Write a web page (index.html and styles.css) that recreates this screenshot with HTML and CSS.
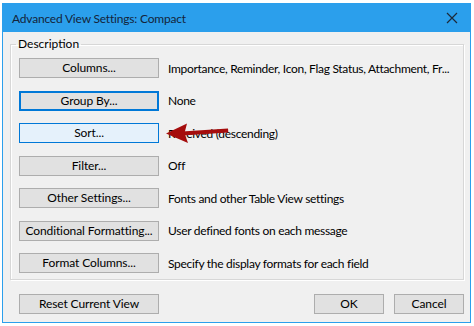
FILE: index.html
```html
<!DOCTYPE html>
<html lang="en">
<head>
    <meta charset="UTF-8">
    <title>Advanced View Settings: Compact</title>
    <link rel="stylesheet" href="styles.css">
</head>
<body>
    <div class="window">
        <div class="titlebar">
            <span class="title">Advanced View Settings: Compact</span>
            <svg class="close" width="12" height="12" viewBox="0 0 12 12">
                <path d="M1 1 L11 11 M11 1 L1 11" stroke="#1c2a3a" stroke-width="1.2" fill="none"/>
            </svg>
        </div>
        <div class="content">
            <fieldset class="group">
                <legend>Description</legend>
                <div class="rows">
                    <button class="btn">Columns...</button>
                    <span class="desc">Importance, Reminder, Icon, Flag Status, Attachment, Fr...</span>

                    <button class="btn btn-default">Group By...</button>
                    <span class="desc">None</span>

                    <button class="btn btn-hover">Sort...</button>
                    <span class="desc desc-arrow">Received (descending)
                        <!-- red callout arrow -->
                        <svg class="arrow" width="70" height="24" viewBox="0 0 70 24">
                            <path d="M16 10.5 L62 7.5 L62.3 11.5 L16.3 14.5 Z" fill="#a50d0d"/>
                            <path d="M0 12.5 L21 2.5 L18.5 12 L22 22 Z" fill="#a50d0d"/>
                        </svg>
                    </span>

                    <button class="btn">Filter...</button>
                    <span class="desc">Off</span>

                    <button class="btn">Other Settings...</button>
                    <span class="desc">Fonts and other Table View settings</span>

                    <button class="btn">Conditional Formatting...</button>
                    <span class="desc">User defined fonts on each message</span>

                    <button class="btn">Format Columns...</button>
                    <span class="desc">Specify the display formats for each field</span>
                </div>
            </fieldset>
            <div class="footer">
                <button class="btn">Reset Current View</button>
                <div class="footer-right">
                    <button class="btn btn-small">OK</button>
                    <button class="btn btn-small">Cancel</button>
                </div>
            </div>
        </div>
    </div>
</body>
</html>
```

FILE: styles.css
```css
/* General styling */
body {
    margin: 0;
    background-color: #fff;
    font-family: Lato, "Open Sans", sans-serif;
    font-size: 12px;
    color: #000;
}

.window {
    margin: 3px 0 0 2px;
    width: 467px;
    height: 318px;
    border: 1px solid #2b9fec;
    background-color: #f0f0f0;
    overflow: hidden;
}

.titlebar {
    height: 28px;
    background-color: #2b9fec;
    display: flex;
    align-items: center;
    justify-content: space-between;
    padding: 0 12px 0 9px;
}

.title {
    font-size: 12px;
    letter-spacing: -0.2px;
    color: #14243a;
}

.close {
    display: block;
}

.content {
    padding: 4px 6px 0 7px;
}

.group {
    margin: 0;
    min-width: 0;
    padding: 6px 8px 6px 8px;
    border: 1px solid #d7d7d7;
    box-shadow: inset 1px 1px 0 #fff, 1px 1px 0 #fff;
}

.group legend {
    padding: 0 2px;
    margin-left: -3px;
    line-height: 16px;
    font-size: 12px;
}

.rows {
    display: grid;
    grid-template-columns: 140px minmax(0, 1fr);
    column-gap: 9px;
    row-gap: 12.5px;
    align-items: center;
}

.btn {
    height: 20px;
    padding: 0;
    font-family: inherit;
    font-size: 12px;
    letter-spacing: -0.1px;
    color: #000;
    background-color: #e1e1e1;
    border: 1px solid #adadad;
    line-height: 16px;
    white-space: nowrap;
}

.btn-default {
    border: 2px solid #0078d7;
}

.btn-hover {
    background-color: #e5f1fb;
    border-color: #0078d7;
}

.desc {
    white-space: nowrap;
    font-size: 12px;
    letter-spacing: -0.3px;
}

.desc-arrow {
    position: relative;
}

.arrow {
    position: absolute;
    left: -2px;
    top: -5px;
}

.footer {
    display: flex;
    justify-content: space-between;
    margin-top: 14px;
    padding-left: 9px;
}

.footer > .btn {
    width: 140px;
}

.footer-right {
    display: flex;
    gap: 10px;
}

.btn-small {
    width: 70px;
}
```
